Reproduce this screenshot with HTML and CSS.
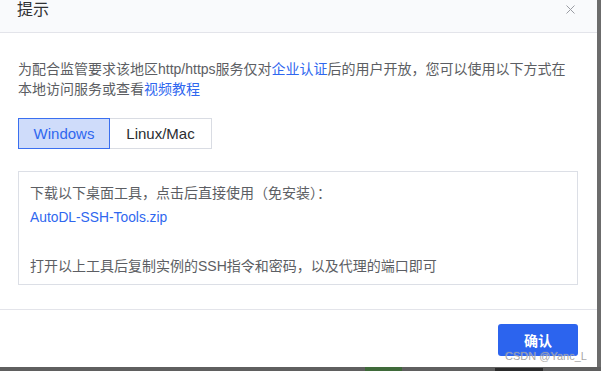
FILE: index.html
```html
<!DOCTYPE html>
<html lang="zh">

<head>
    <meta charset="utf-8">
    <title>提示</title>
    <link rel="stylesheet" href="styles.css">
</head>

<body>
    <div class="page">
        <div class="row">
            <!-- dialog -->
            <div class="dialog">
                <div class="dialog-header">
                    <span class="title">提示</span>
                    <svg class="close" width="9" height="9" viewBox="0 0 9 9">
                        <path d="M0.5 0.5 L8.5 8.5 M8.5 0.5 L0.5 8.5" stroke="#9a9ca3" stroke-width="1" fill="none"/>
                    </svg>
                </div>
                <div class="dialog-body">
                    <p class="notice">为配合监管要求该地区http/https服务仅对<a>企业认证</a>后的用户开放，您可以使用以下方式在本地访问服务或查看<a>视频教程</a></p>
                    <div class="tabs">
                        <button class="tab valgt">Windows</button>
                        <button class="tab">Linux/Mac</button>
                    </div>
                    <div class="box">
                        <p>下载以下桌面工具，点击后直接使用（免安装）：</p>
                        <p><a class="zip">AutoDL-SSH-Tools.zip</a></p>
                        <p>&nbsp;</p>
                        <p>打开以上工具后复制实例的SSH指令和密码，以及代理的端口即可</p>
                    </div>
                </div>
                <div class="dialog-footer">
                    <button class="ok">确认</button>
                    <span class="watermark">CSDN @Yanc_L</span>
                </div>
            </div>
            <div class="edge"></div>
        </div>
        <!-- page under the overlay -->
        <div class="under">
            <span class="green"></span>
            <span class="dark"></span>
        </div>
    </div>
</body>

</html>
```

FILE: styles.css
```css
body {
    margin: 0;
    padding: 0;
    background-color: #5f5f5f;
    font-family: "Liberation Sans", "Noto Sans CJK SC", sans-serif;
    font-size: 14px;
    overflow: hidden;
}

.page {
    width: 601px;
    height: 371px;
    overflow: hidden;
}

.row {
    display: flex;
}

.dialog {
    width: 597px;
    height: 367px;
    background-color: #ffffff;
    display: flex;
    flex-direction: column;
}

.edge {
    width: 4px;
    background-color: #6c6c6c;
}

.dialog-header {
    height: 32px;
    border-bottom: 1px solid #e3e4ea;
    background-color: #f9fafc;
    display: flex;
    justify-content: space-between;
    align-items: flex-start;
    padding: 0 22px 0 17px;
}

.title {
    font-size: 16px;
    line-height: 20px;
    color: #303133;
}

.close {
    margin-top: 5px;
}

.dialog-body {
    width: 560px;
    padding: 26px 19px 24px 18px;
    color: #5c5e63;
}

.notice {
    margin: 0;
    line-height: 20px;
}

a {
    color: #2f67ef;
    text-decoration: none;
}

.tabs {
    display: flex;
    margin-top: 19px;
}

.tab {
    height: 31px;
    font-family: "Liberation Sans", sans-serif;
    font-size: 15px;
    border: 1px solid #d9dce3;
    background-color: #ffffff;
    color: #2b2d31;
    padding: 0;
    margin: 0;
}

.tab.valgt {
    width: 92px;
    background-color: #cfdcfa;
    border-color: #3a6ff0;
    color: #2f67ef;
}

.tab + .tab {
    width: 102px;
    border-left: none;
}

.box {
    margin-top: 22px;
    border: 1px solid #dcdfe6;
    padding: 9px 11px 6px;
}

.box p {
    margin: 0;
    line-height: 24px;
}

.zip {
    font-size: 13.8px;
}

.dialog-footer {
    flex: 1;
    border-top: 1px solid #e3e4ea;
    display: flex;
    justify-content: flex-end;
    align-items: flex-start;
    padding: 14px 19px 0 0;
    position: relative;
}

.ok {
    width: 80px;
    height: 32px;
    border: none;
    border-radius: 3px;
    background-color: #2c64ee;
    color: #ffffff;
    font-family: "Liberation Sans", "Noto Sans CJK SC", sans-serif;
    font-size: 14px;
    font-weight: bold;
}

.watermark {
    position: absolute;
    left: 505px;
    top: 40px;
    font-size: 11px;
    line-height: 12px;
    color: rgba(150, 150, 150, 0.85);
    text-shadow: 0 0 1px rgba(255, 255, 255, 0.6);
}

.under {
    height: 4px;
    display: flex;
    align-items: flex-start;
    overflow: hidden;
}

.green {
    width: 37px;
    height: 4px;
    margin-left: 365px;
    background-color: #3f6a3a;
}

.dark {
    width: 48px;
    height: 3px;
    margin-left: 93px;
    margin-top: 1px;
    background-color: #2a2a2a;
}
```
